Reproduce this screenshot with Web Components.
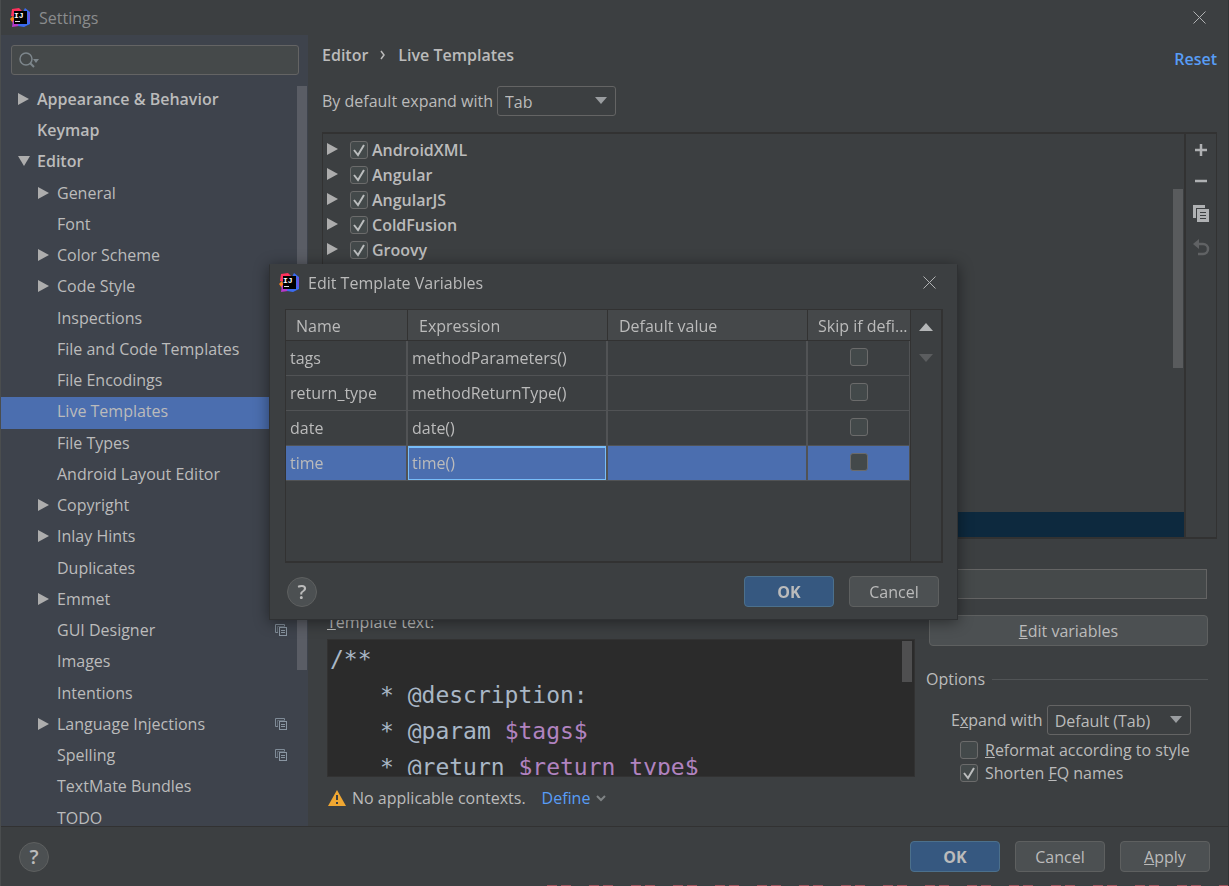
<!DOCTYPE html>
<html lang="en">
<head>
<meta charset="utf-8">
<meta name="viewport" content="width=device-width, initial-scale=1">
<title>Settings</title>
<style>
  html, body { margin: 0; height: 100%; }
  body {
    background: #3c3f41;
    color: #bbbbbb;
    font: 16px/20px "Open Sans", "Noto Sans", sans-serif;
    overflow: hidden;
    --panel: #3c3f41;
    --field: #45494a;
    --line: #323232;
    --outline: #646464;
    --select: #4b6eaf;
    --link: #589df6;
    --side: #3e434c;
  }
</style>
</head>
<body>
<settings-window></settings-window>

<script>
const define = (name, html, setup) => {
  const template = document.createElement('template');
  template.innerHTML = '<style>*{box-sizing:border-box}</style>' + html;
  customElements.define(name, class extends HTMLElement {
    connectedCallback() {
      if (this.shadowRoot) return;
      const root = this.attachShadow({ mode: 'open' });
      root.append(template.content.cloneNode(true));
      if (setup) setup(this, root);
    }
  });
};

/* ---------- icons ---------- */
const ICONS = {
  logo: [20, 20, `
    <path d="M2 1 9 0 13 4 8 9 1 8Z" fill="#fe315d"/>
    <path d="M0 11 3 8 5 13 3 15Z" fill="#fc801d"/>
    <path d="M2 19 3 12 10 15 9 18Z" fill="#b639c9"/>
    <path d="M15 0 20 4 20 16 14 19 8 18 11 8Z" fill="#3b6bf0"/>
    <path d="M18 4 20 5 20 14 18 14Z" fill="#6a55dd"/>
    <rect x="4" y="3" width="13" height="13" fill="#000"/>
    <text x="4" y="10" font-family="Liberation Mono" font-weight="700" font-size="8" fill="#fff">IJ</text>
    <rect x="5" y="13" width="5" height="1" fill="#ddd"/>`],
  close: [13, 13, '<path d="M.5.5 12.500 12.500M12.500.5.5 12.500" stroke="currentColor" fill="none"/>'],
  right: [11, 12, '<path d="M0 0 11 6 0 12Z" fill="#adadad"/>'],
  down: [12, 11, '<path d="M0 0 12 0 6 10Z" fill="#adadad"/>'],
  search: [21, 17, '<circle cx="7" cy="7" r="6" fill="none" stroke="#7d868c" stroke-width="1.500"/><path d="m11 11 4 4" stroke="#7d868c" stroke-width="2"/><path d="M14 7h6L17 11Z" fill="#7d868c"/>'],
  copies: [12, 12, '<path d="M.5 8.500V.5H9.500V2.500M.5 8.500H3" fill="none" stroke="#7f8b97"/><path d="M2.500 8V2.500H10" fill="none" stroke="#606a75"/><rect x="4.500" y="3.500" width="7" height="8" fill="none" stroke="#8a96a2"/><path d="M6 6.500h4M6 8.500h4" stroke="#8a96a2"/>'],
  add: [14, 14, '<path d="M7 1v12M1 7h12" stroke="#afb1b3" stroke-width="2.500"/>'],
  remove: [14, 14, '<path d="M1 7h12" stroke="#afb1b3" stroke-width="2.500"/>'],
  duplicate: [16, 17, '<path d="M0 0H12V3H3V13H0Z" fill="#afb1b3"/><path d="M4 4H16V17H4Z" fill="#afb1b3"/><path d="M7 7.500h6M7 10.500h6M7 13.500h6" stroke="#3c3f41"/>'],
  undo: [17, 17, '<path d="M0 5 6 0V10Z" fill="#606264"/><path d="M5 5h5a5 5 0 0 1 0 10H5" fill="none" stroke="#606264" stroke-width="2.500"/>'],
  moveUp: [14, 8, '<path d="M0 8 7 0 14 8Z" fill="#b4b6b7"/>'],
  moveDown: [14, 8, '<path d="M0 0H14L7 8Z" fill="#5b5d5f"/>'],
  arrow: [12, 8, '<path d="M0 0H12L6 7Z" fill="#9a9da0"/>'],
  check: [14, 14, '<path d="M2 7 6 12 12 2" fill="none" stroke="#bbbdbe" stroke-width="2"/>'],
  warning: [18, 16, '<path d="M9 0 18 16H0Z" fill="#f0a732"/><path d="M9 5v5M9 12v2" stroke="#3c3f41" stroke-width="2"/>'],
  chevron: [10, 7, '<path d="m1 1 4 4 4-4" fill="none" stroke="#7f8385" stroke-width="2"/>'],
  crumb: [6, 10, '<path d="m1 1 3 4-3 4" fill="none" stroke="#bbb" stroke-width="1.500"/>']
};
customElements.define('ui-icon', class extends HTMLElement {
  connectedCallback() {
    if (this.shadowRoot) return;
    const [w, h, body] = ICONS[this.getAttribute('name')];
    this.attachShadow({ mode: 'open' }).innerHTML =
      `<style>:host{display:block;flex:none}svg{display:block}</style>
       <svg width="${w}" height="${h}" viewBox="0 0 ${w} ${h}" aria-hidden="true">${body}</svg>`;
  }
});

/* ---------- controls ---------- */
define('ui-button', `
  <style>
    :host { display: block; width: 90px; }
    button { width: 100%; height: 31px; padding: 1px 0 0; font: inherit; color: inherit;
      background: #4c5052; border: 1px solid #5e6060; border-radius: 4px; }
    :host([primary]) button { background: #365880; border-color: #4c708c; font-weight: 700; }
    :host([help]) { width: 30px; }
    :host([help]) button { height: 30px; padding: 0; border-radius: 50%; font-size: 20px; font-weight: 600; }
    :host([bare]) { width: auto; }
    :host([bare]) button { display: block; height: auto; padding: 0; border: 0; background: none; }
  </style>
  <button type="button"><slot></slot></button>`,
  (host, root) => {
    if (host.hasAttribute('label')) root.querySelector('button').setAttribute('aria-label', host.getAttribute('label'));
  });

define('ui-select', `
  <style>
    :host { display: flex; align-items: center; gap: 4px; }
    .box { display: grid; align-items: center; }
    .box > * { grid-area: 1 / 1; }
    select { appearance: none; height: 30px; padding: 2px 40px 0 7px; font: inherit; color: inherit;
      width: var(--select-width, 119px);
      background: var(--panel); border: 1px solid var(--outline); border-radius: 3px; }
    ui-icon { justify-self: end; margin-right: 9px; pointer-events: none; }
  </style>
  <label for="s"><slot></slot></label>
  <span class="box"><select id="s"><option></option></select><ui-icon name="arrow"></ui-icon></span>`,
  (host, root) => { root.querySelector('option').textContent = host.getAttribute('value'); });

define('ui-check', `
  <style>
    :host { display: flex; align-items: center; gap: var(--check-gap, 7px); }
    .box { display: grid; place-items: center; }
    .box > * { grid-area: 1 / 1; }
    input { appearance: none; margin: 0; width: 18px; height: 18px; background: #43494a;
      border: 1px solid #6b6b6b; border-radius: 3px; }
    ui-icon { visibility: hidden; pointer-events: none; }
    input:checked + ui-icon { visibility: visible; }
  </style>
  <span class="box"><input id="c" type="checkbox"><ui-icon name="check"></ui-icon></span>
  <label for="c"><slot></slot></label>`,
  (host, root) => {
    const input = root.querySelector('input');
    input.checked = host.hasAttribute('checked');
    if (host.hasAttribute('label')) {
      input.setAttribute('aria-label', host.getAttribute('label'));
      root.querySelector('label').remove();
    }
  });

define('title-bar', `
  <style>
    :host { display: flex; align-items: center; gap: 9px; }
    h1 { flex: 1; margin: 0; font: inherit; padding-top: 1px; }
    ui-button { color: #b0b2b3; }
  </style>
  <ui-icon name="logo"></ui-icon><h1><slot></slot></h1>
  <ui-button bare label="Close"><ui-icon name="close"></ui-icon></ui-button>`);

/* ---------- settings tree ---------- */
define('tree-item', `
  <style>
    :host { display: flex; align-items: center; height: 31px; padding: 0 10px 4px 17px; }
    :host(:nth-child(4n+3)) { height: 32px; }
    :host([level="2"]) { padding-left: 37px; }
    :host([level="1"]) { font-weight: 600; }
    :host([selected]) { background: var(--select); margin-right: -10px; }
    .twisty { width: 19px; }
    .name { flex: 1; }
  </style>
  <span class="twisty"></span><span class="name"><slot></slot></span>`,
  (host, root) => {
    host.setAttribute('role', 'treeitem');
    const add = (name, parent) => {
      const el = document.createElement('ui-icon');
      el.setAttribute('name', name);
      parent.append(el);
    };
    if (host.hasAttribute('fold')) add(host.getAttribute('fold'), root.querySelector('.twisty'));
    if (host.hasAttribute('project')) add('copies', root);
  });

define('settings-sidebar', `
  <style>
    :host { display: flex; flex-direction: column; width: 307px; background: var(--side); overflow: hidden; }
    .search { display: flex; align-items: center; margin: 10px 9px 10px 10px; height: 30px; padding: 0 7px;
      background: var(--field); border: 1px solid var(--outline); border-radius: 3px; }
    input { flex: 1; min-width: 0; border: 0; padding: 0; background: none; font: inherit; color: inherit; outline: 0; }
    .scroll { flex: 1; min-height: 0; display: grid; grid-template-columns: 1fr 10px; padding-right: 1px; overflow: hidden; }
    .thumb { height: 584px; margin-top: 1px; background: #5a5d65; }
  </style>
  <div class="search"><ui-icon name="search"></ui-icon><input type="text" aria-label="Search settings"></div>
  <div class="scroll">
    <div role="tree" aria-label="Settings categories">
      <tree-item level="1" fold="right">Appearance &amp; Behavior</tree-item>
      <tree-item level="1">Keymap</tree-item>
      <tree-item level="1" fold="down">Editor</tree-item>
      <tree-item level="2" fold="right">General</tree-item>
      <tree-item level="2">Font</tree-item>
      <tree-item level="2" fold="right">Color Scheme</tree-item>
      <tree-item level="2" fold="right">Code Style</tree-item>
      <tree-item level="2">Inspections</tree-item>
      <tree-item level="2">File and Code Templates</tree-item>
      <tree-item level="2">File Encodings</tree-item>
      <tree-item level="2" selected>Live Templates</tree-item>
      <tree-item level="2">File Types</tree-item>
      <tree-item level="2">Android Layout Editor</tree-item>
      <tree-item level="2" fold="right">Copyright</tree-item>
      <tree-item level="2" fold="right">Inlay Hints</tree-item>
      <tree-item level="2">Duplicates</tree-item>
      <tree-item level="2" fold="right">Emmet</tree-item>
      <tree-item level="2" project>GUI Designer</tree-item>
      <tree-item level="2">Images</tree-item>
      <tree-item level="2">Intentions</tree-item>
      <tree-item level="2" fold="right" project>Language Injections</tree-item>
      <tree-item level="2" project>Spelling</tree-item>
      <tree-item level="2">TextMate Bundles</tree-item>
      <tree-item level="2">TODO</tree-item>
    </div>
    <div class="thumb"></div>
  </div>`);

/* ---------- template groups ---------- */
define('template-group', `
  <style>
    :host { display: flex; align-items: center; gap: 12px; height: 25px; font-weight: 600; --check-gap: 4px; }
    ui-icon { padding-bottom: 1px; }
  </style>
  <ui-icon name="right"></ui-icon><ui-check checked><slot></slot></ui-check>`);

define('template-list', `
  <style>
    :host { display: grid; grid-template-columns: 1fr 32px; min-height: 0; border: 1px solid var(--line); border-width: 2px 1px 2px 1px; overflow: hidden; }
    .groups { display: flex; flex-direction: column; padding-top: 3px; min-height: 0; }
    .rows { flex: 1; display: grid; grid-template-columns: 1fr 10px; padding: 0 1px 0 4px; }
    .thumb { margin-top: 52px; height: 179px; background: #595b5d; }
    .current { height: 25px; background: #0d293e; }
    .tools { display: flex; flex-direction: column; align-items: center; gap: 17px; padding-top: 9px; border-left: 2px solid var(--line); }
  </style>
  <div class="groups">
    <div class="rows">
      <div>
        <template-group>AndroidXML</template-group>
        <template-group>Angular</template-group>
        <template-group>AngularJS</template-group>
        <template-group>ColdFusion</template-group>
        <template-group>Groovy</template-group>
      </div>
      <div class="thumb"></div>
    </div>
    <div class="current"></div>
  </div>
  <div class="tools">
    <ui-button bare label="Add"><ui-icon name="add"></ui-icon></ui-button>
    <ui-button bare label="Remove"><ui-icon name="remove"></ui-icon></ui-button>
    <ui-button bare label="Duplicate"><ui-icon name="duplicate"></ui-icon></ui-button>
    <ui-button bare label="Restore"><ui-icon name="undo"></ui-icon></ui-button>
  </div>`);

define('template-editor', `
  <style>
    :host { display: flex; flex-direction: column; min-width: 0; }
    .frame { display: grid; grid-template-columns: 1fr 10px; margin-top: 7px; height: 138px; padding: 1px 2px 1px 1px;
      background: #2b2b2b; border: 1px solid var(--line); overflow: hidden; }
    .code { font: 23px/36px "DejaVu Sans Mono", monospace; color: #a9b7c6; white-space: pre; outline: 0; min-height: 0; overflow: hidden; padding-left: 1px; }
    .code div + div { padding-left: 50px; }
    b { font-weight: 400; color: #b183c0; }
    .thumb { height: 41px; background: #4f4f50; }
    .status { display: flex; align-items: center; gap: 6px; margin-top: 11px; padding-left: 1px; }
    a { color: var(--link); text-decoration: none; margin-left: 10px; }
  </style>
  <span id="caption"><u>T</u>emplate text:</span>
  <div class="frame">
    <div class="code" role="textbox" aria-multiline="true" aria-labelledby="caption" contenteditable="true" spellcheck="false"><div>/**</div><div>* @description:</div><div>* @param <b>$tags$</b></div><div>* @return <b>$return_type$</b></div></div>
    <div class="thumb"></div>
  </div>
  <div class="status"><ui-icon name="warning"></ui-icon><span>No applicable contexts.</span><a href="#define">Define</a><ui-icon name="chevron"></ui-icon></div>`);

define('template-options', `
  <style>
    :host { display: flex; flex-direction: column; }
    .edit { width: auto; margin-left: 3px; }
    h2 { display: flex; align-items: center; gap: 7px; margin: 23px 0 16px; font: inherit; }
    h2::after { content: ""; flex: 1; height: 1px; background: #515456; }
    ui-select { --select-width: 144px; margin: 0 0 3px 25px; }
    ui-check { margin-left: 34px; height: 23px; }
  </style>
  <ui-button class="edit"><u>E</u>dit variables</ui-button>
  <h2>Options</h2>
  <ui-select value="Default (Tab)">E<u>x</u>pand with</ui-select>
  <ui-check><u>R</u>eformat according to style</ui-check>
  <ui-check checked>Shorten <u>F</u>Q names</ui-check>`);

define('live-templates', `
  <style>
    :host { display: flex; flex-direction: column; min-width: 0; padding: 10px 11px 0 14px; }
    header { display: flex; align-items: center; gap: 12px; font-weight: 600; height: 20px; }
    a { margin-left: auto; padding-top: 8px; color: var(--link); text-decoration: none; }
    .expand { margin: 21px 0 16px; }
    template-list { flex: 1; }
    .description { margin: 30px 10px 16px 5px; height: 30px; background: var(--field); border: 1px solid var(--outline);
      padding: 0 6px; font: inherit; color: inherit; }
    .lower { display: grid; grid-template-columns: 1fr 282px; column-gap: 11px; padding: 0 9px 0 5px; height: 211px; }
    template-editor { margin-top: -3px; }
  </style>
  <header><span>Editor</span><ui-icon name="crumb"></ui-icon><span>Live Templates</span><a href="#reset">Reset</a></header>
  <ui-select class="expand" value="Tab">By default expand with</ui-select>
  <template-list></template-list>
  <input class="description" type="text" aria-label="Description">
  <div class="lower"><template-editor></template-editor><template-options></template-options></div>`);

/* ---------- variables dialog ---------- */
define('variables-table', `
  <style>
    :host { display: grid; grid-template-columns: 1fr 31px; height: 254px; border: 1px solid var(--line); border-width: 1px 2px 2px 1px; }
    table { width: 100%; border-collapse: separate; border-spacing: 0; table-layout: fixed; align-self: start; }
    th { height: 31px; padding: 2px 0 0 11px; text-align: left; font-weight: 400; background: #45484a;
      border-bottom: 1px solid var(--line); border-right: 1px solid var(--line); white-space: nowrap; }
    th:first-child { padding-left: 10px; }
    th:last-child { border-right: 0; padding-left: 10px; }
    td { height: 35px; padding: 0 0 0 4px; border-bottom: 1px solid #515355; border-right: 2px solid #515355; }
    td:last-child { border-right-width: 1px; padding: 0 0 2px; }
    td ui-check { justify-content: center; }
    tr.current td { background: var(--select); background-clip: padding-box; }
    td.focus { box-shadow: inset 0 0 0 1px #78bdf9, inset 0 2px 0 0 #78bdf9; }
    .tools { display: flex; flex-direction: column; align-items: center; gap: 23px; padding-top: 13px; border-left: 1px solid var(--line); }
  </style>
  <table>
    <colgroup><col style="width:122px"><col style="width:200px"><col style="width:200px"><col></colgroup>
    <thead><tr><th>Name</th><th>Expression</th><th>Default value</th><th>Skip if defi...</th></tr></thead>
    <tbody></tbody>
  </table>
  <div class="tools">
    <ui-button bare label="Move up"><ui-icon name="moveUp"></ui-icon></ui-button>
    <ui-button bare label="Move down"><ui-icon name="moveDown"></ui-icon></ui-button>
  </div>`,
  (host, root) => {
    const rows = [['tags', 'methodParameters()'], ['return_type', 'methodReturnType()'], ['date', 'date()'], ['time', 'time()']];
    root.querySelector('tbody').innerHTML = rows.map(([name, expression], i) => {
      const last = i === rows.length - 1;
      return `<tr${last ? ' class="current"' : ''}><td>${name}</td><td${last ? ' class="focus"' : ''}>${expression}</td><td></td>
        <td><ui-check label="Skip ${name} if defined"></ui-check></td></tr>`;
    }).join('');
  });

define('variables-dialog', `
  <style>
    :host { display: block; width: 689px; background: var(--panel); border: 1px solid #2f3133; border-top-color: #3c3f41;
      box-shadow: 0 2px 14px rgba(0,0,0,.45); padding: 0 14px 12px 15px; }
    title-bar { height: 35px; padding-right: 7px; margin: 0 0 9px -6px; }
    footer { display: flex; align-items: center; gap: 15px; margin-top: 13px; padding: 0 4px 0 2px; }
    .ok { margin-left: auto; }
  </style>
  <title-bar>Edit Template Variables</title-bar>
  <variables-table></variables-table>
  <footer><ui-button help label="Help">?</ui-button><ui-button class="ok" primary>OK</ui-button><ui-button>Cancel</ui-button></footer>`,
  host => { host.setAttribute('role', 'dialog'); host.setAttribute('aria-label', 'Edit Template Variables'); });

/* ---------- window ---------- */
define('settings-window', `
  <style>
    :host { display: flex; flex-direction: column; height: 100vh; background: var(--panel); border-left: 1px solid #4a4d4e; border-right: 1px solid #323436; }
    .title { height: 35px; padding: 0 22px 0 9px; color: #8a8c8d; }
    main { flex: 1; min-height: 0; display: grid; grid-template-columns: 307px 1fr; }
    footer { display: flex; align-items: center; gap: 15px; height: 60px; padding: 0 18px; border-top: 1px solid var(--line);
      background: repeating-linear-gradient(90deg, #a0535c 0 10px, transparent 10px 14px, #a0535c 14px 24px, transparent 24px 42px) 546px 100% / 100% 1px no-repeat; }
    .ok { margin-left: auto; }
    .overlay { position: fixed; inset: 0 2px 2px 0; display: grid; place-items: center; }
  </style>
  <title-bar class="title">Settings</title-bar>
  <main><settings-sidebar></settings-sidebar><live-templates></live-templates></main>
  <footer><ui-button help label="Help">?</ui-button><ui-button class="ok" primary>OK</ui-button><ui-button>Cancel</ui-button><ui-button><u>A</u>pply</ui-button></footer>
  <div class="overlay"><variables-dialog></variables-dialog></div>`);
</script>
</body>
</html>
